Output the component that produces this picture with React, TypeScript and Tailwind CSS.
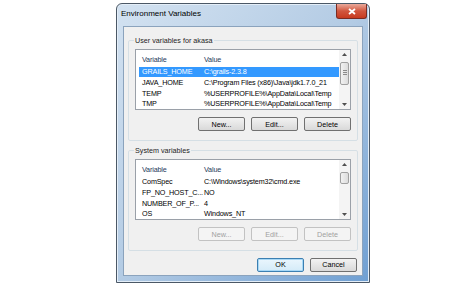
import type { ReactNode } from "react";

const font = { fontFamily: '"Segoe UI", "Liberation Sans", Arial, sans-serif' };

type Row = { name: string; value: string };

const userVars: Row[] = [
  { name: "GRAILS_HOME", value: "C:\\grails-2.3.8" },
  { name: "JAVA_HOME", value: "C:\\Program Files (x86)\\Java\\jdk1.7.0_21" },
  { name: "TEMP", value: "%USERPROFILE%\\AppData\\Local\\Temp" },
  { name: "TMP", value: "%USERPROFILE%\\AppData\\Local\\Temp" },
];

const systemVars: Row[] = [
  { name: "ComSpec", value: "C:\\Windows\\system32\\cmd.exe" },
  { name: "FP_NO_HOST_C...", value: "NO" },
  { name: "NUMBER_OF_P...", value: "4" },
  { name: "OS", value: "Windows_NT" },
];

function Arrow({ down }: { down?: boolean }) {
  return (
    <div className="flex h-[9px] items-center justify-center">
      <svg width="5" height="3" viewBox="0 0 5 3">
        <path d={down ? "M0 0h5L2.5 3z" : "M0 3h5L2.5 0z"} fill="#505050" />
      </svg>
    </div>
  );
}

function ScrollBar({ thumbTop, thumbHeight }: { thumbTop: number; thumbHeight: number }) {
  return (
    <div className="flex w-[11px] flex-col bg-[#f4f4f4]">
      <Arrow />
      <div className="relative flex-1">
        <div
          className="absolute left-[1px] right-[1px] rounded-[2px] border border-[#a0a0a0] bg-gradient-to-r from-[#f2f2f2] to-[#dcdcdc]"
          style={{ top: thumbTop, height: thumbHeight }}
        >
          {thumbHeight > 15 ? (
            <div className="mx-auto mt-[7px] flex w-[4px] flex-col gap-[1px]">
              <div className="h-px bg-[#8a8a8a]" />
              <div className="h-px bg-[#8a8a8a]" />
              <div className="h-px bg-[#8a8a8a]" />
            </div>
          ) : null}
        </div>
      </div>
      <Arrow down />
    </div>
  );
}

function VarList({
  rows,
  selected,
  thumbTop,
  thumbHeight,
}: {
  rows: Row[];
  selected?: number;
  thumbTop: number;
  thumbHeight: number;
}) {
  return (
    <div className="flex h-[61px] border border-[#9aa0a8] bg-white tracking-[-0.15px]">
      <div className="flex flex-1 flex-col pl-[3px] pt-[3px]">
        <div className="flex h-[14px] items-center text-[#1e395b]">
          <span className="w-[65px] pl-[3px]">Variable</span>
          <span>Value</span>
        </div>
        {rows.map((r, i) => (
          <div
            key={r.name}
            className={`flex h-[11px] items-center whitespace-nowrap ${
              i === selected ? "bg-[#3399ff] text-white" : "text-black"
            }`}
          >
            <span className="w-[65px] pl-[3px]">{r.name}</span>
            <span>{r.value}</span>
          </div>
        ))}
      </div>
      <ScrollBar thumbTop={thumbTop} thumbHeight={thumbHeight} />
    </div>
  );
}

function Btn({
  children,
  disabled,
  primary,
  w = 47,
}: {
  children: ReactNode;
  disabled?: boolean;
  primary?: boolean;
  w?: number;
}) {
  const tone = disabled
    ? "border-[#c2c2c2] bg-[#f4f4f4] text-[#a0a0a0]"
    : primary
      ? "border-[#3c7fb1] bg-gradient-to-b from-[#eaf6fd] to-[#d4ebf8] text-black shadow-[inset_0_0_0_1px_#a7d8f6]"
      : "border-[#707070] bg-gradient-to-b from-[#f2f2f2] to-[#d9d9d9] text-black";
  return (
    <div
      className={`flex h-[14px] items-center justify-center rounded-[2px] border ${tone}`}
      style={{ width: w }}
    >
      {children}
    </div>
  );
}

function Group({ title, children, h }: { title: string; children: ReactNode; h: number }) {
  return (
    <fieldset className="rounded-[2px] border border-[#d5dfe5] px-[6px]" style={{ height: h }}>
      <legend className="ml-[-1px] px-[1px] text-[#1e1e1e]">{title}</legend>
      {children}
    </fieldset>
  );
}

export default function App() {
  return (
    <div
      className="flex h-[287px] w-[474px] items-start bg-white pl-[116px] pt-[3px] text-[7.2px] leading-none"
      style={font}
    >
      <div className="flex h-[280px] w-[254px] flex-col rounded-t-[6px] border border-[#4b5866] bg-gradient-to-br from-[#d3e2f1] via-[#b3cbe4] to-[#6f9fd2] shadow-[inset_0_0_0_1px_#e4eef8]">
        <div className="flex h-[22px] items-start">
          <span className="ml-[4px] mt-[6px] text-[8px] text-black">Environment Variables</span>
          <div className="ml-auto mr-[2px] flex h-[15px] w-[31px] items-center justify-center rounded-b-[3px] border border-t-0 border-[#7a2b22] bg-gradient-to-b from-[#e9a99b] via-[#d1563e] to-[#c73a1e]">
            <svg width="8" height="7" viewBox="0 0 8 7">
              <path d="M1 1l6 5M7 1L1 6" stroke="#fff" strokeWidth="1.8" />
            </svg>
          </div>
        </div>
        <div className="mx-[6px] mb-[6px] flex flex-1 flex-col border border-[#8ba3bd] bg-[#f0f0f0] px-[4px] pt-[10px]">
          <Group title="User variables for akasa" h={104}>
            <div className="mt-[5px]">
              <VarList rows={userVars} selected={0} thumbTop={3} thumbHeight={23} />
            </div>
            <div className="mt-[7px] flex justify-end gap-[6px]">
              <Btn>New...</Btn>
              <Btn>Edit...</Btn>
              <Btn>Delete</Btn>
            </div>
          </Group>
          <div className="mt-[6px]">
            <Group title="System variables" h={104}>
              <div className="mt-[5px]">
                <VarList rows={systemVars} thumbTop={3} thumbHeight={12} />
              </div>
              <div className="mt-[7px] flex justify-end gap-[6px]">
                <Btn disabled>New...</Btn>
                <Btn disabled>Edit...</Btn>
                <Btn disabled>Delete</Btn>
              </div>
            </Group>
          </div>
          <div className="mt-[7px] flex justify-end gap-[6px] pr-[1px]">
            <Btn primary>OK</Btn>
            <Btn>Cancel</Btn>
          </div>
        </div>
      </div>
    </div>
  );
}
